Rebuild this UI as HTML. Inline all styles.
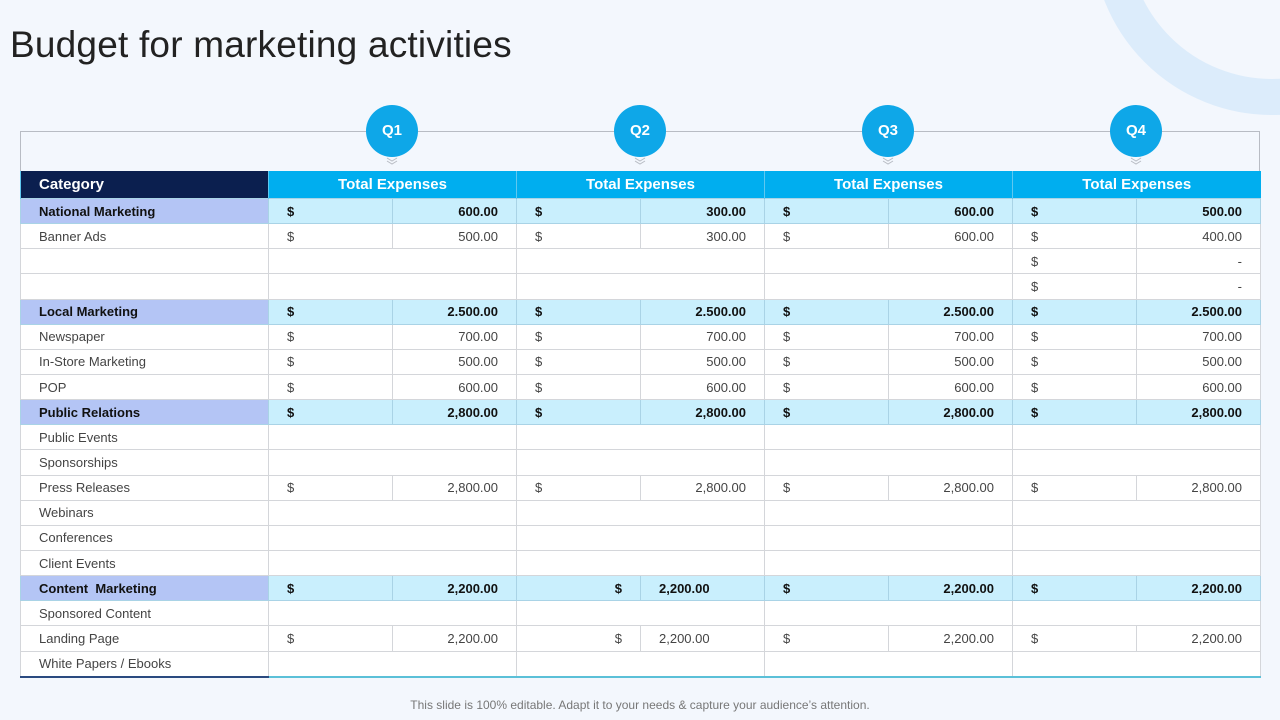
<!DOCTYPE html>
<html><head><style>
body{margin:0;width:1280px;height:720px;background:#f3f7fd;position:relative;overflow:hidden;font-family:"Liberation Sans",sans-serif}
h1{position:absolute;left:10px;top:24px;margin:0;font-weight:normal;font-size:37px;color:#222;letter-spacing:0.2px}
.box{position:absolute;left:20px;top:131px;width:1238px;height:40px;border:1px solid #b8bcc4;border-bottom:none}
.q{position:absolute;top:105px;width:52px;height:52px;border-radius:50%;background:#0ea7e8;color:#fff;font-weight:bold;font-size:15px;text-align:center;line-height:52px}
.chev{position:absolute;top:157px;width:10px;height:8px}
table{position:absolute;left:20px;top:171px;border-collapse:collapse;table-layout:fixed;width:1240px}
td{height:24.15px;padding:0;border:1px solid #d4d6da;font-size:13px;color:#444;white-space:nowrap;background:#fff}
td.c{padding-left:18px}
td.d{padding-left:18px}
td.v{text-align:right;padding-right:18px}
tr.h td{background:#00aeef;color:#fff;font-weight:bold;font-size:15px;text-align:center;height:27px;border:none;border-left:1px solid #5fc8f0}
tr.h td.c{background:#0b1f4f;text-align:left}
tr.s td{background:#c9effd;font-weight:bold;color:#111;border-color:#a9d3e6}
tr.s td.c{background:#b4c5f5}
.foot{position:absolute;top:698px;left:0;width:1280px;text-align:center;font-size:12px;color:#777}
</style></head><body>
<svg style="position:absolute;left:0;top:0" width="1280" height="720"><circle cx="1272" cy="-65" r="162" fill="none" stroke="#dcecfb" stroke-width="36"/>
<g fill="none" stroke="#b8bcc4" stroke-width="1"><path d="M387 158l5 3 5-3M387 161l5 3 5-3"/><path d="M635 158l5 3 5-3M635 161l5 3 5-3"/><path d="M883 158l5 3 5-3M883 161l5 3 5-3"/><path d="M1131 158l5 3 5-3M1131 161l5 3 5-3"/></g></svg>
<h1>Budget for marketing activities</h1>
<div class="box"></div>
<div class="q" style="left:366px">Q1</div><div class="q" style="left:614px">Q2</div><div class="q" style="left:862px">Q3</div><div class="q" style="left:1110px">Q4</div>
<table>
<colgroup><col style="width:248px"><col style="width:124px"><col style="width:124px"><col style="width:124px"><col style="width:124px"><col style="width:124px"><col style="width:124px"><col style="width:124px"><col style="width:124px"></colgroup>
<tr class="h"><td class="c">Category</td><td colspan="2">Total Expenses</td><td colspan="2">Total Expenses</td><td colspan="2">Total Expenses</td><td colspan="2">Total Expenses</td></tr>
<tr class="s"><td class="c">National Marketing</td><td class="d">$</td><td class="v">600.00</td><td class="d">$</td><td class="v">300.00</td><td class="d">$</td><td class="v">600.00</td><td class="d">$</td><td class="v">500.00</td></tr>
<tr><td class="c">Banner Ads</td><td class="d">$</td><td class="v">500.00</td><td class="d">$</td><td class="v">300.00</td><td class="d">$</td><td class="v">600.00</td><td class="d">$</td><td class="v">400.00</td></tr>
<tr><td class="c"></td><td colspan="2"></td><td colspan="2"></td><td colspan="2"></td><td class="d">$</td><td class="v">-</td></tr>
<tr><td class="c"></td><td colspan="2"></td><td colspan="2"></td><td colspan="2"></td><td class="d">$</td><td class="v">-</td></tr>
<tr class="s"><td class="c">Local Marketing</td><td class="d">$</td><td class="v">2.500.00</td><td class="d">$</td><td class="v">2.500.00</td><td class="d">$</td><td class="v">2.500.00</td><td class="d">$</td><td class="v">2.500.00</td></tr>
<tr><td class="c">Newspaper</td><td class="d">$</td><td class="v">700.00</td><td class="d">$</td><td class="v">700.00</td><td class="d">$</td><td class="v">700.00</td><td class="d">$</td><td class="v">700.00</td></tr>
<tr><td class="c">In-Store Marketing</td><td class="d">$</td><td class="v">500.00</td><td class="d">$</td><td class="v">500.00</td><td class="d">$</td><td class="v">500.00</td><td class="d">$</td><td class="v">500.00</td></tr>
<tr><td class="c">POP</td><td class="d">$</td><td class="v">600.00</td><td class="d">$</td><td class="v">600.00</td><td class="d">$</td><td class="v">600.00</td><td class="d">$</td><td class="v">600.00</td></tr>
<tr class="s"><td class="c">Public Relations</td><td class="d">$</td><td class="v">2,800.00</td><td class="d">$</td><td class="v">2,800.00</td><td class="d">$</td><td class="v">2,800.00</td><td class="d">$</td><td class="v">2,800.00</td></tr>
<tr><td class="c">Public Events</td><td colspan="2"></td><td colspan="2"></td><td colspan="2"></td><td colspan="2"></td></tr>
<tr><td class="c">Sponsorships</td><td colspan="2"></td><td colspan="2"></td><td colspan="2"></td><td colspan="2"></td></tr>
<tr><td class="c">Press Releases</td><td class="d">$</td><td class="v">2,800.00</td><td class="d">$</td><td class="v">2,800.00</td><td class="d">$</td><td class="v">2,800.00</td><td class="d">$</td><td class="v">2,800.00</td></tr>
<tr><td class="c">Webinars</td><td colspan="2"></td><td colspan="2"></td><td colspan="2"></td><td colspan="2"></td></tr>
<tr><td class="c">Conferences</td><td colspan="2"></td><td colspan="2"></td><td colspan="2"></td><td colspan="2"></td></tr>
<tr><td class="c">Client Events</td><td colspan="2"></td><td colspan="2"></td><td colspan="2"></td><td colspan="2"></td></tr>
<tr class="s"><td class="c">Content &nbsp;Marketing</td><td class="d">$</td><td class="v">2,200.00</td><td class="v">$</td><td class="d">2,200.00</td><td class="d">$</td><td class="v">2,200.00</td><td class="d">$</td><td class="v">2,200.00</td></tr>
<tr><td class="c">Sponsored Content</td><td colspan="2"></td><td colspan="2"></td><td colspan="2"></td><td colspan="2"></td></tr>
<tr><td class="c">Landing Page</td><td class="d">$</td><td class="v">2,200.00</td><td class="v">$</td><td class="d">2,200.00</td><td class="d">$</td><td class="v">2,200.00</td><td class="d">$</td><td class="v">2,200.00</td></tr>
<tr style="border-bottom:2px solid #5bc0d8"><td class="c" style="border-bottom:2px solid #2a4a80">White Papers / Ebooks</td><td colspan="2"></td><td colspan="2"></td><td colspan="2"></td><td colspan="2"></td></tr>
</table>
<div class="foot">This slide is 100% editable. Adapt it to your needs &amp; capture your audience’s attention.</div>
</body></html>
